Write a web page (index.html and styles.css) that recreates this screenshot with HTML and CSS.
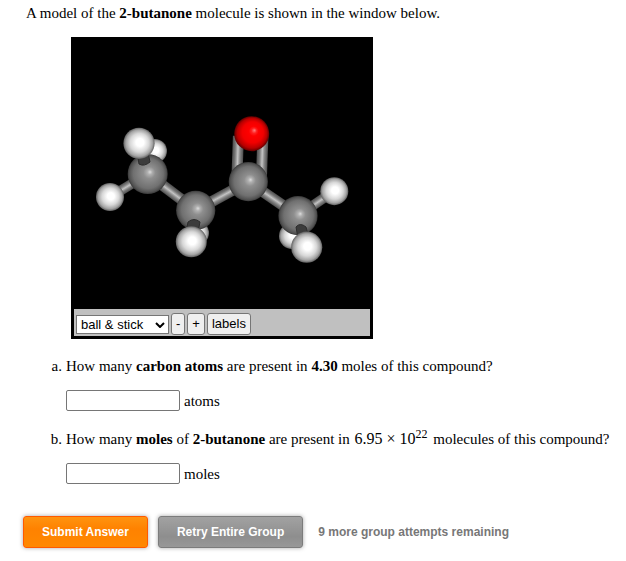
FILE: index.html
```html
<!DOCTYPE html>
<html lang="en">
<head>
    <meta charset="UTF-8">
    <meta name="viewport" content="width=device-width, initial-scale=1.0">
    <title>2-butanone</title>
    <link rel="stylesheet" href="styles.css">
</head>
<body>

<form class="question">
    <p class="intro">A model of the <b>2-butanone</b> molecule is shown in the window below.</p>

    <div class="viewer">
        <svg class="molecule" viewBox="74 40 296 269" role="img" aria-label="Ball and stick model of 2-butanone">
            <defs>
                <radialGradient id="carbon" cx="0.5" cy="0.5" r="0.5" fx="0.56" fy="0.45">
                    <stop offset="0" stop-color="#dcdcdc"/>
                    <stop offset="0.12" stop-color="#b0b0b0"/>
                    <stop offset="0.3" stop-color="#8e8e8e"/>
                    <stop offset="0.75" stop-color="#707070"/>
                    <stop offset="0.92" stop-color="#525252"/>
                    <stop offset="1" stop-color="#383838"/>
                </radialGradient>
                <radialGradient id="hydrogen" cx="0.5" cy="0.5" r="0.5" fx="0.54" fy="0.46">
                    <stop offset="0" stop-color="#fff"/>
                    <stop offset="0.25" stop-color="#fff"/>
                    <stop offset="0.6" stop-color="#d8d8d8"/>
                    <stop offset="0.85" stop-color="#a4a4a4"/>
                    <stop offset="1" stop-color="#606060"/>
                </radialGradient>
                <radialGradient id="oxygen" cx="0.5" cy="0.5" r="0.5" fx="0.58" fy="0.4">
                    <stop offset="0" stop-color="#ff8080"/>
                    <stop offset="0.15" stop-color="#ff2020"/>
                    <stop offset="0.28" stop-color="#ff0000"/>
                    <stop offset="0.6" stop-color="#f20000"/>
                    <stop offset="0.85" stop-color="#b80000"/>
                    <stop offset="1" stop-color="#600000"/>
                </radialGradient>
                <linearGradient id="bond" x1="0" y1="0" x2="0" y2="1">
                    <stop offset="0" stop-color="#4c4c4c"/>
                    <stop offset="0.25" stop-color="#777"/>
                    <stop offset="0.5" stop-color="#c4c4c4"/>
                    <stop offset="0.7" stop-color="#888"/>
                    <stop offset="1" stop-color="#4c4c4c"/>
                </linearGradient>
            </defs>
            <rect x="74" y="40" width="296" height="269" fill="#000"/>

            <!-- hydrogens behind the carbons -->
            <circle cx="155" cy="151" r="12" fill="url(#hydrogen)"/>
            <circle cx="197" cy="233" r="12" fill="url(#hydrogen)"/>
            <circle cx="292" cy="236" r="13" fill="url(#hydrogen)"/>

            <!-- bonds -->
            <rect width="44" height="10" transform="translate(147.7 174) rotate(148.5) translate(0 -5)" fill="url(#bond)"/>
            <rect width="60" height="11" transform="translate(147.7 174) rotate(37.1) translate(0 -5.5)" fill="url(#bond)"/>
            <rect width="60" height="11" transform="translate(195.7 210.3) rotate(-28.5) translate(0 -5.5)" fill="url(#bond)"/>
            <rect width="60" height="11" transform="translate(248.3 181.7) rotate(34.4) translate(0 -5.5)" fill="url(#bond)"/>
            <rect width="44" height="10" transform="translate(298 215.7) rotate(-34.2) translate(0 -5)" fill="url(#bond)"/>
            <rect width="40" height="11" transform="translate(237 176) rotate(-88) translate(0 -5.5)" fill="url(#bond)"/>
            <rect width="40" height="11" transform="translate(261.5 176) rotate(-88) translate(0 -5.5)" fill="url(#bond)"/>

            <!-- carbons and oxygen -->
            <circle cx="147.7" cy="174" r="20" fill="url(#carbon)"/>
            <circle cx="195.7" cy="210.3" r="19.6" fill="url(#carbon)"/>
            <circle cx="248.3" cy="181.7" r="19.6" fill="url(#carbon)"/>
            <circle cx="298" cy="215.7" r="19.6" fill="url(#carbon)"/>
            <circle cx="251.7" cy="133.7" r="17.5" fill="url(#oxygen)"/>

            <!-- bonds pointing at the viewer -->
            <g fill="none" stroke-linejoin="round">
                <path d="M139 164Q144 167 150 162L148 152H137ZM188 222Q194 217 200 222L198 232H186ZM296 227Q300 222 306 227L309 238H298Z" fill="#3c3c3c" stroke="#2c2c2c" stroke-width="1"/>
            </g>

            <!-- front hydrogens -->
            <circle cx="139" cy="143.3" r="15.6" fill="url(#hydrogen)"/>
            <circle cx="110" cy="197" r="14" fill="url(#hydrogen)"/>
            <circle cx="191.3" cy="241.7" r="15.5" fill="url(#hydrogen)"/>
            <circle cx="334.3" cy="191.2" r="14" fill="url(#hydrogen)"/>
            <circle cx="306.7" cy="247.2" r="15.6" fill="url(#hydrogen)"/>
        </svg>
        <div class="viewer-bar">
            <span class="style-picker">
                <select aria-label="Model style">
                    <option>ball &amp; stick</option>
                    <option>space fill</option>
                    <option>wireframe</option>
                </select>
                <svg class="chevron" viewBox="0 0 10 6" aria-hidden="true"><path d="M1 1L5 5L9 1" fill="none" stroke="#000" stroke-width="2"/></svg>
            </span>
            <button type="button">-</button>
            <button type="button">+</button>
            <button type="button">labels</button>
        </div>
    </div>

    <div class="part">
        <span class="letter">a.</span>
        <p>How many <b>carbon atoms</b> are present in <b>4.30</b> moles of this compound?</p>
        <div class="answer">
            <input type="text" id="atoms">
            <label for="atoms">atoms</label>
        </div>
    </div>

    <div class="part">
        <span class="letter">b.</span>
        <p>How many <b>moles</b> of <b>2-butanone</b> are present in <span class="math">6.95 × 10<sup>22</sup></span> molecules of this compound?</p>
        <div class="answer">
            <input type="text" id="moles">
            <label for="moles">moles</label>
        </div>
    </div>

    <div class="actions">
        <button type="submit" class="btn submit">Submit Answer</button>
        <button type="button" class="btn retry">Retry Entire Group</button>
        <span class="attempts">9 more group attempts remaining</span>
    </div>
</form>

</body>
</html>
```
FILE: styles.css
```css
* {
    box-sizing: border-box;
    margin: 0;
    padding: 0;
}

body {
    background: #fff;
    color: #000;
    font-family: "Liberation Serif", "Times New Roman", serif;
    font-size: 15px;
    line-height: 18px;
}

.question {
    padding: 4px 0 12px 23px;
}

.intro {
    margin-left: 3px;
}

/* Molecule viewer */
.viewer {
    width: fit-content;
    margin: 15px 0 18px 48px;
    border: 3px solid #000;
    background: #000;
}

.molecule {
    display: block;
    width: 296px;
}

.viewer-bar {
    display: flex;
    align-items: flex-start;
    gap: 2px;
    padding: 4px 2px 1px;
    background: #c0c0c0;
}

.viewer-bar select,
.viewer-bar button {
    border: 1px solid #767676;
    border-radius: 3px;
    color: #000;
    font-family: "Liberation Sans", Arial, sans-serif;
    font-size: 13px;
}

.viewer-bar button {
    height: 22px;
    padding: 0 4px 2px;
    background: #efefef;
}

.style-picker {
    display: grid;
    align-items: center;
    margin-top: 2px;
}

.style-picker select {
    grid-area: 1 / 1;
    width: 93px;
    height: 19px;
    padding-left: 4px;
    border-radius: 0;
    background: #fff;
    appearance: none;
}

.chevron {
    grid-area: 1 / 1;
    justify-self: end;
    width: 10px;
    margin-right: 4px;
    pointer-events: none;
}

/* Question parts */
.part {
    display: grid;
    grid-template-columns: 39px 1fr;
    column-gap: 4px;
    row-gap: 15px;
    margin-bottom: 19px;
}

.letter {
    text-align: right;
}

.answer {
    grid-column: 2;
    display: flex;
    align-items: center;
    gap: 4px;
}

.answer input {
    width: 114px;
    height: 21px;
    padding: 0 4px;
    border: 1px solid #767676;
    border-radius: 2px;
    font-size: 14px;
}

.math {
    margin: 0 2px 0 1px;
    font-size: 16px;
}

.math sup {
    font-size: 12px;
    line-height: 0;
}

/* Bottom buttons */
.actions {
    display: flex;
    align-items: center;
    gap: 10px;
    margin-top: 32px;
    font-family: "Liberation Sans", Arial, sans-serif;
    font-size: 12px;
    font-weight: bold;
}

.btn {
    height: 32px;
    padding: 0 18px;
    border-radius: 3px;
    box-shadow: 0 0 4px rgba(0, 0, 0, 0.35);
    color: #fff;
    font: inherit;
    cursor: pointer;
}

.submit {
    border: 1px solid #ff5a00;
    background: linear-gradient(#ff9410, #ff8200 40%, #ff8800);
}

.retry {
    border: 1px solid #7c7c7c;
    background: linear-gradient(#a2a2a2, #8e8e8e 65%, #989898);
}

.attempts {
    margin-left: 5px;
    color: #777;
}
```
